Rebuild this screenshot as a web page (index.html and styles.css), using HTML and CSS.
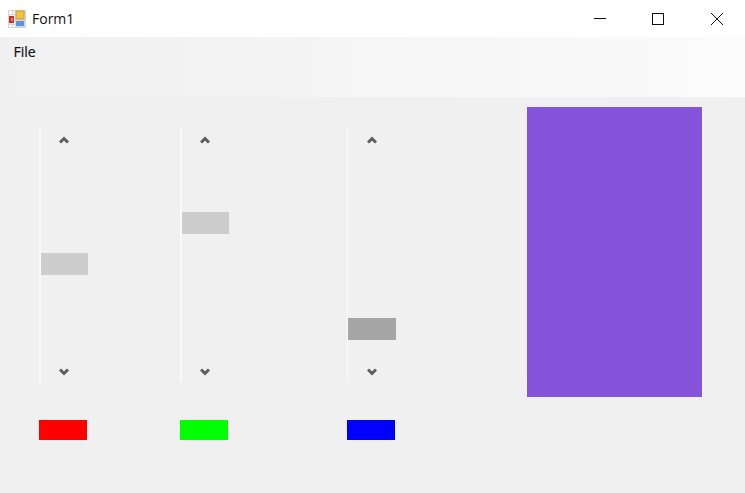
FILE: index.html
```html
<!DOCTYPE html>
<html lang="en">
<head>
<meta charset="utf-8">
<title>Form1</title>
<link rel="stylesheet" href="styles.css">
</head>
<body>
<div class="window">
  <header class="titlebar">
    <svg class="app-icon" width="18" height="18" viewBox="0 0 18 18">
      <rect x="0" y="0" width="18" height="18" fill="#d6d6d6"/>
      <rect x="1" y="1" width="3" height="3" fill="#fff"/>
      <rect x="5" y="1" width="2" height="3" fill="#f4f4f4"/>
      <rect x="1" y="5" width="6" height="9" fill="#f2f2f2"/>
      <rect x="1" y="6" width="5" height="7" fill="#c8302a"/>
      <rect x="3" y="8" width="2" height="3" fill="#e28078"/>
      <rect x="8" y="1" width="8" height="8" fill="#f3c23a"/>
      <rect x="8" y="1" width="8" height="8" fill="none" stroke="#c79a2c" stroke-width="0.8"/>
      <rect x="8" y="11" width="8" height="5" fill="#5a94e6"/>
      <rect x="1" y="15" width="3" height="2" fill="#fff"/>
      <rect x="5" y="15" width="2" height="2" fill="#fff"/>
    </svg>
    <span class="title">Form1</span>
    <div class="controls">
      <span class="control">
        <svg width="12" height="12" viewBox="0 0 12 12"><path d="M0 5.5H12" stroke="#111" fill="none"/></svg>
      </span>
      <span class="control">
        <svg width="12" height="12" viewBox="0 0 12 12"><rect x="0.5" y="0.5" width="11" height="11" stroke="#111" fill="none"/></svg>
      </span>
      <span class="control">
        <svg width="12" height="12" viewBox="0 0 12 12"><path d="M0 0L12 12M12 0L0 12" stroke="#111" fill="none"/></svg>
      </span>
    </div>
  </header>
  <nav class="menubar"><span class="menu-item">File</span></nav>
  <main class="content">
    <section class="channel">
      <div class="slider">
        <svg class="arrow" width="10" height="9" viewBox="0 0 10 9"><path d="M1 7.5L5 3.5L9 7.5" stroke="#5c5c5c" stroke-width="3" fill="none"/></svg>
        <div class="thumb" style="margin-top:109px"></div>
        <svg class="arrow arrow-down" width="10" height="9" viewBox="0 0 10 9"><path d="M1 1.5L5 5.5L9 1.5" stroke="#5c5c5c" stroke-width="3" fill="none"/></svg>
      </div>
      <div class="swatch red"></div>
    </section>
    <section class="channel">
      <div class="slider">
        <svg class="arrow" width="10" height="9" viewBox="0 0 10 9"><path d="M1 7.5L5 3.5L9 7.5" stroke="#5c5c5c" stroke-width="3" fill="none"/></svg>
        <div class="thumb" style="margin-top:68px"></div>
        <svg class="arrow arrow-down" width="10" height="9" viewBox="0 0 10 9"><path d="M1 1.5L5 5.5L9 1.5" stroke="#5c5c5c" stroke-width="3" fill="none"/></svg>
      </div>
      <div class="swatch green"></div>
    </section>
    <section class="channel">
      <div class="slider slider-thin">
        <svg class="arrow" width="10" height="9" viewBox="0 0 10 9"><path d="M1 7.5L5 3.5L9 7.5" stroke="#5c5c5c" stroke-width="3" fill="none"/></svg>
        <div class="thumb active" style="margin-top:174px"></div>
        <svg class="arrow arrow-down" width="10" height="9" viewBox="0 0 10 9"><path d="M1 1.5L5 5.5L9 1.5" stroke="#5c5c5c" stroke-width="3" fill="none"/></svg>
      </div>
      <div class="swatch blue"></div>
    </section>
    <div class="preview"></div>
  </main>
</div>
</body>
</html>
```
FILE: styles.css
```css
* { box-sizing: border-box; }
html, body { margin: 0; padding: 0; }
body {
  width: 745px;
  height: 493px;
  overflow: hidden;
  background: #f0f0f0;
  font-family: "Open Sans", "Noto Sans", "Liberation Sans", sans-serif;
  color: #111;
}
.window { display: flex; flex-direction: column; height: 493px; }
.titlebar {
  display: flex;
  align-items: center;
  height: 37px;
  flex: none;
  padding-left: 8px;
  background: #fff;
}
.app-icon { flex: none; }
.title { margin-left: 6px; font-size: 14px; }
.controls { display: flex; margin-left: auto; }
.control {
  display: flex;
  align-items: center;
  justify-content: center;
  width: 58px;
  height: 37px;
}
.control:last-child { padding-left: 2px; }
.menubar {
  flex: none;
  height: 60px;
  padding: 6px 0 0 13.5px;
  background: linear-gradient(to right, #f0f0f0, #fbfbfb);
  font-size: 14px;
  line-height: 18px;
}
.menu-item { -webkit-text-stroke: 0.2px #111; }
.content {
  flex: 1;
  display: flex;
  align-items: flex-start;
  padding: 10px 0 0 39px;
}
.channel {
  display: flex;
  flex-direction: column;
  width: 48px;
  margin-right: 93px;
  padding-top: 21px;
}
.channel:nth-child(2) { margin-right: 119px; }
.channel:nth-child(3) { margin-right: 132px; }
.slider {
  display: flex;
  flex-direction: column;
  width: 49px;
  height: 254px;
  border-left: 2px solid #fafafa;
  padding-top: 7px;
}
.slider-thin { border-left-width: 1px; }
.slider-thin .thumb { width: 48px; }
.arrow { flex: none; align-self: center; margin-right: 1px; }
.arrow-down { margin-top: auto; margin-bottom: 5px; }
.thumb {
  flex: none;
  width: 47px;
  height: 22px;
  background: #cdcdcd;
}
.thumb.active { background: #a6a6a6; }
.swatch { height: 20px; margin-top: 38px; }
.red { background: #ff0000; }
.green { background: #00ff00; }
.blue { background: #0000ff; }
.preview { width: 175px; height: 290px; background: #8654db; }
```
